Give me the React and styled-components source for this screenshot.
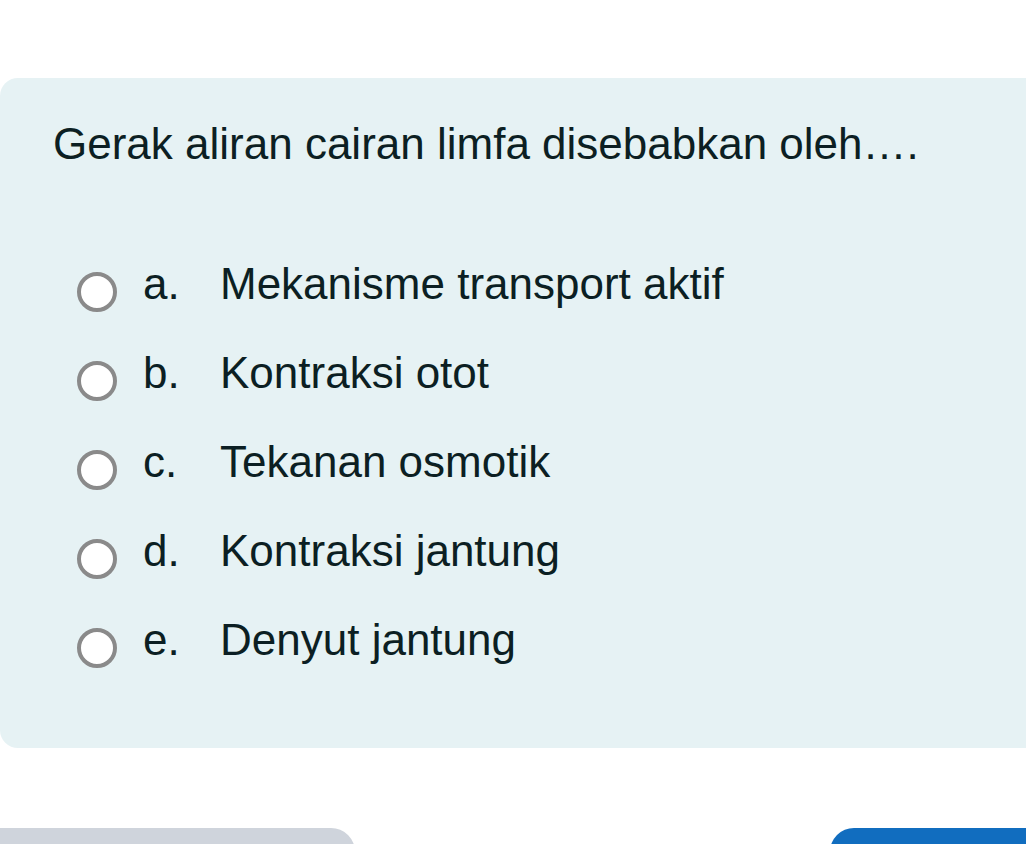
import React from "react";
import styled, { createGlobalStyle } from "styled-components";

const GlobalStyle = createGlobalStyle`
  html, body {
    margin: 0;
    padding: 0;
    background: #ffffff;
    overflow: hidden;
  }
  body {
    font-family: "Liberation Sans", Arial, Helvetica, sans-serif;
  }
`;

const Page = styled.div`
  width: 1026px;
  height: 844px;
  padding-top: 78px;
  box-sizing: border-box;
  overflow: hidden;
`;

const Card = styled.section`
  background: #e6f2f4;
  border-radius: 18px 0 0 18px;
  padding: 41px 0 64px 53px;
`;

const Question = styled.h1`
  margin: 0;
  font-weight: 400;
  font-size: 44px;
  line-height: 50px;
  color: #0c1f23;
`;

const OptionList = styled.ul`
  list-style: none;
  margin: 70px 0 0;
  padding: 0;
`;

const Option = styled.li`
  display: flex;
  align-items: center;
  height: 89px;
  padding-left: 24px;
  font-size: 44px;
  line-height: 50px;
  color: #0c1f23;
`;

const Radio = styled.span`
  flex: none;
  width: 40px;
  height: 40px;
  box-sizing: border-box;
  border: 4px solid #8a8a8a;
  border-radius: 50%;
  background: #ffffff;
  margin-top: 16px;
`;

const Letter = styled.span`
  width: 77px;
  margin-left: 26px;
  flex: none;
`;

const Label = styled.span``;

const Footer = styled.div`
  margin-top: 80px;
  display: flex;
  justify-content: space-between;
`;

const NavButton = styled.div`
  height: 60px;
  width: ${(p) => p.$width}px;
  background: ${(p) => p.$color};
  border-radius: ${(p) => p.$radius};
`;

const options = [
  ["a.", "Mekanisme transport aktif"],
  ["b.", "Kontraksi otot"],
  ["c.", "Tekanan osmotik"],
  ["d.", "Kontraksi jantung"],
  ["e.", "Denyut jantung"],
];

export default function App() {
  return (
    <>
      <GlobalStyle />
      <Page>
        <Card>
          <Question>Gerak aliran cairan limfa disebabkan oleh….</Question>
          <OptionList>
            {options.map(([letter, text]) => (
              <Option key={letter}>
                <Radio />
                <Letter>{letter}</Letter>
                <Label>{text}</Label>
              </Option>
            ))}
          </OptionList>
        </Card>
        <Footer>
          <NavButton $width={355} $color="#cfd4dc" $radius="0 24px 0 0" />
          <NavButton $width={196} $color="#116dbf" $radius="24px 0 0 0" />
        </Footer>
      </Page>
    </>
  );
}
